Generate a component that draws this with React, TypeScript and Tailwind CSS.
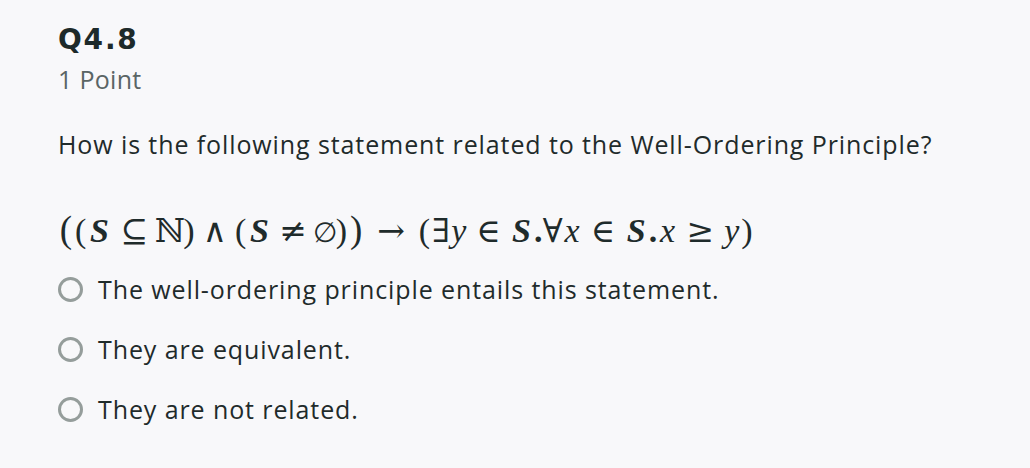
type Tok = { c: string; w: string; cls?: string };

const toks: Tok[] = [
  { c: "(", w: "w-[16px]", cls: "text-[37px]" },
  { c: "(", w: "w-[13.4px]" },
  { c: "S", w: "w-[24px]", cls: "italic font-bold" },
  { c: "⊆", w: "w-[46px]", cls: "sym" },
  { c: "ℕ", w: "w-[24.9px]", cls: "sym" },
  { c: ")", w: "w-[13.4px]" },
  { c: "∧", w: "w-[38.4px]", cls: "sym" },
  { c: "(", w: "w-[13.4px]" },
  { c: "S", w: "w-[24px]", cls: "italic font-bold" },
  { c: "≠", w: "w-[43.3px]", cls: "sym" },
  { c: "∅", w: "w-[20px]", cls: "text-[28px]" },
  { c: ")", w: "w-[13.4px]" },
  { c: ")", w: "w-[16px]", cls: "text-[37px]" },
  { c: "→", w: "w-[53.7px]", cls: "sym" },
  { c: "(", w: "w-[13.4px]" },
  { c: "∃", w: "w-[19.2px]", cls: "sym" },
  { c: "y", w: "w-[16.9px]", cls: "italic" },
  { c: "∈", w: "w-[42.2px]", cls: "sym" },
  { c: "S", w: "w-[24px]", cls: "italic font-bold" },
  { c: ".", w: "w-[9.6px]", cls: "font-bold" },
  { c: "∀", w: "w-[19.2px]", cls: "sym" },
  { c: "x", w: "w-[19.7px]", cls: "italic" },
  { c: "∈", w: "w-[42.2px]", cls: "sym" },
  { c: "S", w: "w-[24px]", cls: "italic font-bold" },
  { c: ".", w: "w-[9.6px]", cls: "font-bold" },
  { c: "x", w: "w-[19.7px]", cls: "italic" },
  { c: "≥", w: "w-[46px]", cls: "sym" },
  { c: "y", w: "w-[16.9px]", cls: "italic" },
  { c: ")", w: "w-[13.4px]" },
];

export default function App() {
  const sans = { fontFamily: "'Open Sans', 'Noto Sans', sans-serif" };
  const serif = { fontFamily: "'Liberation Serif', 'DejaVu Serif', serif" };
  const sym = { fontFamily: "'DejaVu Serif', 'Liberation Serif', serif" };
  const options = [
    "The well-ordering principle entails this statement.",
    "They are equivalent.",
    "They are not related.",
  ];
  return (
    <div className="w-[1030px] h-[468px] bg-[#f8f8fa] text-[#1f2b2b] px-[58px] pt-[24px]" style={sans}>
      <div
        className="text-[28px] font-bold leading-[32px] tracking-[1.8px] text-[#1d2a2a]"
        style={{ fontFamily: "'DejaVu Sans', sans-serif" }}
      >
        Q4.8
      </div>
      <div className="text-[25px] leading-[30px] mt-[8px] tracking-[0.3px] text-[#5a6565]">1 Point</div>
      <div className="text-[25px] leading-[30px] mt-[35px] tracking-[0.9px]">
        How is the following statement related to the Well-Ordering Principle?
      </div>
      <div className="flex items-baseline whitespace-nowrap mt-[51px] h-[42px] text-[34px] leading-[40px]" style={serif}>
        {toks.map((t, i) => {
          const isSym = t.cls?.includes("sym");
          const extra = (t.cls || "").replace("sym", "");
          return (
            <span
              key={i}
              className={`flex justify-center shrink-0 ${t.w} ${extra} ${isSym ? "text-[33px]" : ""}`}
              style={isSym ? sym : undefined}
            >
              {t.c}
            </span>
          );
        })}
      </div>
      <div className="flex flex-col gap-[30px] mt-[22px]">
        {options.map((o) => (
          <div key={o} className="flex items-center gap-[15px] h-[30px]">
            <span className="w-[25px] h-[25px] rounded-full border-[3px] border-[#959d9b] shrink-0" />
            <span className="text-[25px] leading-[30px] tracking-[0.9px]">{o}</span>
          </div>
        ))}
      </div>
    </div>
  );
}
